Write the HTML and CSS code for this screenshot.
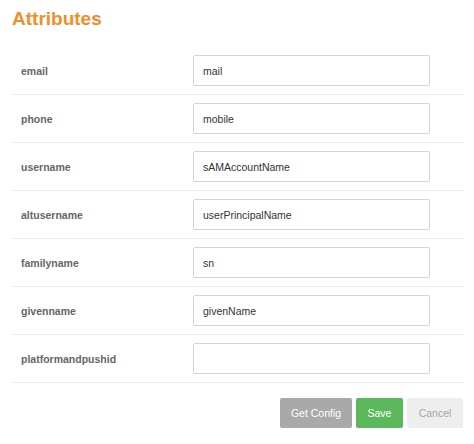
FILE: index.html
```html
<!DOCTYPE html>
<html>
<head>
<meta charset="utf-8">
<link rel="stylesheet" href="styles.css">
</head>
<body>
<div class="panel">
  <h1 class="title">Attributes</h1>
  <div class="attrs">
    <div class="row"><span class="label">email</span><input class="field" value="mail"></div>
    <div class="row"><span class="label">phone</span><input class="field" value="mobile"></div>
    <div class="row"><span class="label">username</span><input class="field" value="sAMAccountName"></div>
    <div class="row"><span class="label">altusername</span><input class="field" value="userPrincipalName"></div>
    <div class="row"><span class="label">familyname</span><input class="field" value="sn"></div>
    <div class="row"><span class="label">givenname</span><input class="field" value="givenName"></div>
    <div class="row"><span class="label">platformandpushid</span><input class="field" value=""></div>
  </div>
  <div class="actions">
    <button class="btn btn-config">Get Config</button>
    <button class="btn btn-save">Save</button>
    <button class="btn btn-cancel">Cancel</button>
  </div>
</div>
</body>
</html>
```

FILE: styles.css
```css
html, body {
  margin: 0;
  padding: 0;
  background: #ffffff;
}
body {
  font-family: "Liberation Sans", Arial, sans-serif;
}
.panel {
  width: 451px;
  padding: 0 11px 0 12px;
}
.title {
  margin: 8px 0 17px;
  font-size: 19px;
  line-height: 22px;
  font-weight: bold;
  color: #ef8f2c;
}
.row {
  display: grid;
  grid-template-columns: 181px 237px;
  align-items: center;
  padding: 8px 0;
  border-bottom: 1px solid #ebebeb;
}
.label {
  padding-left: 9px;
  font-size: 10.5px;
  font-weight: bold;
  color: #666666;
}
.field {
  box-sizing: border-box;
  width: 237px;
  height: 31px;
  margin: 0;
  padding: 0 9px;
  border: 1px solid #d4d4d4;
  border-radius: 2px;
  font-family: "Liberation Sans", Arial, sans-serif;
  font-size: 10.5px;
  color: #333333;
  background: #fff;
  outline: none;
}
.actions {
  display: flex;
  justify-content: flex-end;
  gap: 4px;
  margin-top: 15px;
}
.btn {
  box-sizing: border-box;
  height: 30px;
  padding: 0;
  border: none;
  border-radius: 2px;
  font-family: "Liberation Sans", Arial, sans-serif;
  font-size: 10.5px;
  white-space: nowrap;
  cursor: pointer;
}
.btn-config {
  width: 72px;
  background: #a9a9a9;
  color: #ffffff;
}
.btn-save {
  width: 47px;
  background: #5cb85c;
  color: #ffffff;
}
.btn-cancel {
  width: 56px;
  background: #eeeeee;
  color: #a6a6a6;
}
```
